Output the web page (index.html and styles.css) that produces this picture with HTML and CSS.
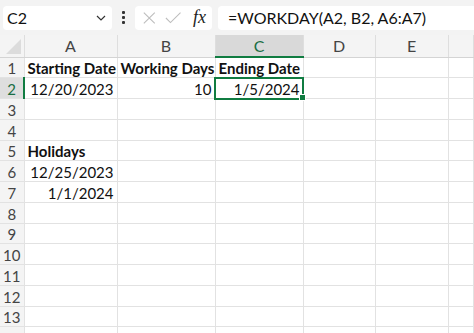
FILE: index.html
```html
<!DOCTYPE html>
<html>
<head>
    <title>WORKDAY</title>
    <link rel="stylesheet" href="styles.css">
</head>
<body>
    <div class="formula-bar">
        <div class="name-box">
            <span>C2</span>
            <svg class="chevron" width="10" height="6" viewBox="0 0 10 6"><path d="M1 1 L5 5 L9 1" fill="none" stroke="#333" stroke-width="1.2"/></svg>
        </div>
        <div class="dots"><i></i><i></i><i></i></div>
        <div class="fx-box">
            <svg width="16" height="16" viewBox="0 0 16 16"><path d="M2 2 L14 14 M14 2 L2 14" stroke="#bdbdbd" stroke-width="1.2"/></svg>
            <svg width="18" height="16" viewBox="0 0 18 16"><path d="M1 8 L6 13 L17 2" fill="none" stroke="#bdbdbd" stroke-width="1.2"/></svg>
            <span class="fx">fx</span>
        </div>
        <div class="formula">=WORKDAY(A2, B2, A6:A7)</div>
    </div>

    <table class="sheet">
        <colgroup>
            <col style="width:24px">
            <col style="width:93px">
            <col style="width:98px">
            <col style="width:88px">
            <col style="width:72px">
            <col style="width:73px">
            <col>
        </colgroup>
        <tr class="head">
            <th class="corner"><span></span></th>
            <th>A</th><th>B</th><th class="sel">C</th><th>D</th><th>E</th><th></th>
        </tr>
        <tr><th>1</th><td class="b">Starting Date</td><td class="b">Working Days</td><td class="b">Ending Date</td><td></td><td></td><td></td></tr>
        <tr><th class="sel-row">2</th><td class="r">12/20/2023</td><td class="r">10</td><td class="r active">1/5/2024</td><td></td><td></td><td></td></tr>
        <tr><th>3</th><td></td><td></td><td></td><td></td><td></td><td></td></tr>
        <tr><th>4</th><td></td><td></td><td></td><td></td><td></td><td></td></tr>
        <tr><th>5</th><td class="b">Holidays</td><td></td><td></td><td></td><td></td><td></td></tr>
        <tr><th>6</th><td class="r">12/25/2023</td><td></td><td></td><td></td><td></td><td></td></tr>
        <tr><th>7</th><td class="r">1/1/2024</td><td></td><td></td><td></td><td></td><td></td></tr>
        <tr><th>8</th><td></td><td></td><td></td><td></td><td></td><td></td></tr>
        <tr><th>9</th><td></td><td></td><td></td><td></td><td></td><td></td></tr>
        <tr><th>10</th><td></td><td></td><td></td><td></td><td></td><td></td></tr>
        <tr><th>11</th><td></td><td></td><td></td><td></td><td></td><td></td></tr>
        <tr><th>12</th><td></td><td></td><td></td><td></td><td></td><td></td></tr>
        <tr><th>13</th><td></td><td></td><td></td><td></td><td></td><td></td></tr>
        <tr><th></th><td></td><td></td><td></td><td></td><td></td><td></td></tr>
    </table>
</body>
</html>
```

FILE: styles.css
```css
body {
    margin: 0;
    font-family: Lato, "Liberation Sans", sans-serif;
    background: #fff;
    overflow: hidden;
    color: #111;
}

/* formula bar */
.formula-bar {
    display: flex;
    align-items: center;
    height: 35px;
    padding: 0 0 0 3px;
    background: #f3f3f3;
    box-sizing: border-box;
}
.name-box {
    width: 109px;
    height: 24px;
    background: #fff;
    border-radius: 4px;
    display: flex;
    align-items: center;
    justify-content: space-between;
    padding: 0 6px 0 4px;
    box-sizing: border-box;
    font-size: 16px;
}
.dots {
    width: 23px;
    display: flex;
    flex-direction: column;
    align-items: center;
    gap: 2px;
}
.dots i {
    width: 3px;
    height: 3px;
    background: #333;
    border-radius: 1px;
}
.fx-box {
    width: 77px;
    height: 24px;
    background: #fff;
    border-radius: 4px;
    display: flex;
    align-items: center;
    gap: 8px;
    padding: 0 6px 0 7px;
    box-sizing: border-box;
}
.fx {
    font-family: "Liberation Serif", serif;
    font-style: italic;
    font-size: 18px;
    margin-left: 4px;
    color: #222;
}
.formula {
    flex: 1;
    margin-left: 6px;
    height: 24px;
    background: #fff;
    border-radius: 4px 0 0 4px;
    font-size: 16px;
    line-height: 24px;
    padding-left: 10px;
}

/* grid */
.sheet {
    border-collapse: collapse;
    table-layout: fixed;
    width: 474px;
    font-size: 15px;
}
.sheet th, .sheet td {
    height: 20.75px;
    padding: 0 3px;
    box-sizing: border-box;
    border: 1px solid #e2e2e2;
    white-space: nowrap;
    overflow: visible;
    line-height: 18px;
    vertical-align: bottom;
}
.sheet tr:first-child th,
.sheet tr:first-child td {
    border-top: none;
}
.sheet th:first-child {
    border-left: none;
}
.head th {
    height: 22px;
    background: #f4f4f4;
    font-weight: normal;
    color: #444;
    font-size: 16px;
    vertical-align: middle;
    border-color: #dedede;
    border-bottom: 1px solid #d4d4d4;
}
.head th.sel {
    background: #d9d9d9;
    color: #1a6e44;
    border-bottom: 2px solid #107c41;
}
.head th.corner {
    position: relative;
}
.corner span {
    position: absolute;
    right: 3px;
    bottom: 3px;
    width: 0;
    height: 0;
    border-left: 15px solid transparent;
    border-bottom: 15px solid #dcdcdc;
}
tr > th {
    background: #f4f4f4;
    font-weight: normal;
    color: #444;
    font-size: 15px;
    text-align: center;
    padding: 0;
    border-right: 1px solid #cfcfcf;
}
th.sel-row {
    background: #dedede;
    color: #1a6e44;
    border-right: 2px solid #107c41;
}
td.b {
    font-weight: bold;
}
td.r {
    text-align: right;
}
td.active {
    position: relative;
    outline: 2px solid #107c41;
    outline-offset: -1px;
}
td.active::after {
    content: "";
    position: absolute;
    right: -3px;
    bottom: -3px;
    width: 5px;
    height: 5px;
    background: #107c41;
    border: 1px solid #fff;
}
```
